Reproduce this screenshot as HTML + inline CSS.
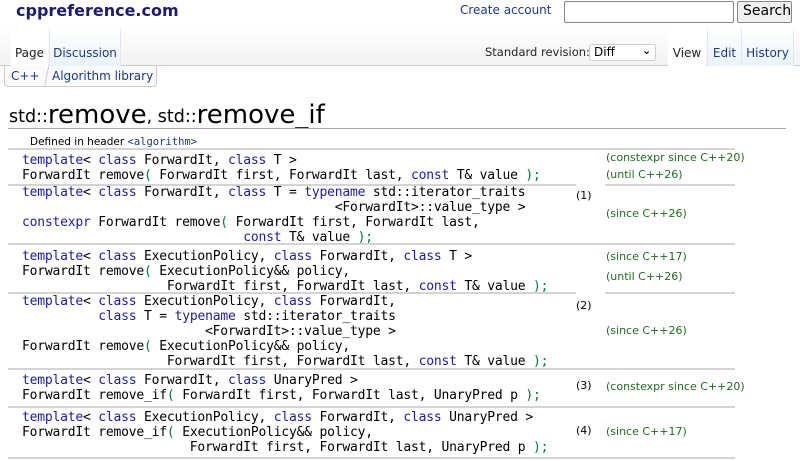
<!DOCTYPE html>
<html><head><meta charset="utf-8"><style>
*{margin:0;padding:0;box-sizing:border-box}
body{width:800px;height:461px;overflow:hidden;background:#fff;font-family:"DejaVu Sans","Liberation Sans",sans-serif;position:relative;color:#000}
.a{position:absolute;white-space:pre}
.logo{left:16px;top:1px;font:bold 16px "DejaVu Sans",sans-serif;color:#1b1b73}
.nav{color:#1a3a8a;font-size:12px}
.bar{position:absolute;left:0;top:25px;width:800px;height:41px;background:linear-gradient(#fff,#f3f3f3);border-bottom:1px solid #c8ccd0}
.tab{position:absolute;top:29px;height:37px;font-size:12px;padding-top:17px;text-align:center}
.code{font:13px "DejaVu Sans Mono","Liberation Mono",monospace;letter-spacing:-0.2px;color:#000;line-height:15px}
.k{color:#1c1ca8}.s{color:#007a3a}
.hr{position:absolute;height:2px;background:#d4d4d4}
.v{color:#1f6e1f;font-size:11px}
.n{font-size:11px}
</style></head><body>
<div class="a logo">cppreference.com</div>
<div class="a nav" style="left:460px;top:3px">Create account</div>
<div class="a" style="left:564px;top:1px;width:170px;height:22px;border:1px solid #888;border-radius:2px"></div>
<div class="a" style="left:737px;top:1px;width:55px;height:22px;border:1px solid #888;border-radius:2px;background:#f0f0f0;font-size:14px;padding:1px 0 0 5px">Search</div>
<div class="bar"></div>
<div class="tab" style="left:11px;width:37px;background:#fff;color:#222">Page</div>
<div class="tab nav" style="left:49px;width:72px;background:linear-gradient(#fff,#eaf3fb);border-left:1px solid #dde8f3;border-right:1px solid #dde8f3">Discussion</div>
<div class="a" style="left:485px;top:45px;font-size:11.5px;color:#222">Standard revision:</div>
<div class="a" style="left:589px;top:44px;width:67px;height:17px;border:1px solid #ccc;border-radius:3px;background:#fff;font-size:12px;padding:0 0 0 4px">Diff<span style="position:absolute;left:52px;top:-1px;font-size:11px;font-weight:bold">&#8964;</span></div>
<div class="tab" style="left:668px;width:38px;background:#fff;color:#222">View</div>
<div class="tab nav" style="left:707px;width:34px;background:linear-gradient(#fff,#eaf3fb);border-left:1px solid #dde8f3">Edit</div>
<div class="tab nav" style="left:741px;width:53px;background:linear-gradient(#fff,#eaf3fb);border-left:1px solid #dde8f3;border-right:1px solid #dde8f3">History</div>
<div class="a" style="left:4px;top:66px;width:153px;height:21px;border:1px solid #ccc;border-top:none;border-radius:0 0 4px 4px;background:#fafafa"></div>
<div class="a" style="left:46px;top:67px;width:1px;height:20px;background:#ccc;transform:skewX(-12deg)"></div>
<div class="a nav" style="left:11px;top:69px">C++</div>
<div class="a nav" style="left:52px;top:69px">Algorithm library</div>
<div class="a" style="left:9px;top:99px;font-size:17.5px"><span>std::</span><span style="font-size:26px;position:relative;top:1px">remove</span>, <span>std::</span><span style="font-size:26px;position:relative;top:1px">remove_if</span></div>
<div class="hr" style="left:8px;top:128px;width:778px;height:1px;background:#aaa"></div>
<div class="a" style="left:30px;top:136px;font-size:10.5px">Defined in header <span style="font-family:'DejaVu Sans Mono',monospace;color:#1a3a8a">&lt;algorithm&gt;</span></div>
<div class="hr" style="left:8px;top:148px;width:727px"></div>

<div class="a code" style="left:22px;top:153px"><span class="k">template</span>&lt; <span class="k">class</span> ForwardIt, <span class="k">class</span> T &gt;
ForwardIt remove<span class="s">(</span> ForwardIt first, ForwardIt last, <span class="k">const</span> T&amp; value <span class="s">);</span></div>
<div class="hr" style="left:8px;top:184px;width:568px"></div>
<div class="hr" style="left:605px;top:184px;width:130px"></div>
<div class="a code" style="left:22px;top:185px"><span class="k">template</span>&lt; <span class="k">class</span> ForwardIt, <span class="k">class</span> T = <span class="k">typename</span> std::iterator_traits
                                         &lt;ForwardIt&gt;::value_type &gt;
<span class="k">constexpr</span> ForwardIt remove<span class="s">(</span> ForwardIt first, ForwardIt last,
                             <span class="k">const</span> T&amp; value <span class="s">);</span></div>
<div class="a v" style="left:606px;top:151px">(constexpr since C++20)</div>
<div class="a v" style="left:606px;top:168px">(until C++26)</div>
<div class="a n" style="left:576px;top:189px">(1)</div>
<div class="a v" style="left:606px;top:207px">(since C++26)</div>
<div class="hr" style="left:8px;top:243px;width:727px"></div>

<div class="a code" style="left:22px;top:249px"><span class="k">template</span>&lt; <span class="k">class</span> ExecutionPolicy, <span class="k">class</span> ForwardIt, <span class="k">class</span> T &gt;
ForwardIt remove<span class="s">(</span> ExecutionPolicy&amp;&amp; policy,
                   ForwardIt first, ForwardIt last, <span class="k">const</span> T&amp; value <span class="s">);</span></div>
<div class="a v" style="left:606px;top:250px">(since C++17)</div>
<div class="a v" style="left:606px;top:270px">(until C++26)</div>
<div class="hr" style="left:8px;top:292px;width:568px"></div>
<div class="hr" style="left:605px;top:292px;width:130px"></div>
<div class="a code" style="left:22px;top:294px"><span class="k">template</span>&lt; <span class="k">class</span> ExecutionPolicy, <span class="k">class</span> ForwardIt,
          <span class="k">class</span> T = <span class="k">typename</span> std::iterator_traits
                        &lt;ForwardIt&gt;::value_type &gt;
ForwardIt remove<span class="s">(</span> ExecutionPolicy&amp;&amp; policy,
                   ForwardIt first, ForwardIt last, <span class="k">const</span> T&amp; value <span class="s">);</span></div>
<div class="a n" style="left:576px;top:299px">(2)</div>
<div class="a v" style="left:606px;top:324px">(since C++26)</div>
<div class="hr" style="left:8px;top:368px;width:727px"></div>

<div class="a code" style="left:22px;top:373px"><span class="k">template</span>&lt; <span class="k">class</span> ForwardIt, <span class="k">class</span> UnaryPred &gt;
ForwardIt remove_if<span class="s">(</span> ForwardIt first, ForwardIt last, UnaryPred p <span class="s">);</span></div>
<div class="a n" style="left:576px;top:379px">(3)</div>
<div class="a v" style="left:606px;top:380px">(constexpr since C++20)</div>
<div class="hr" style="left:8px;top:406px;width:727px"></div>

<div class="a code" style="left:22px;top:410px"><span class="k">template</span>&lt; <span class="k">class</span> ExecutionPolicy, <span class="k">class</span> ForwardIt, <span class="k">class</span> UnaryPred &gt;
ForwardIt remove_if<span class="s">(</span> ExecutionPolicy&amp;&amp; policy,
                      ForwardIt first, ForwardIt last, UnaryPred p <span class="s">);</span></div>
<div class="a n" style="left:576px;top:424px">(4)</div>
<div class="a v" style="left:606px;top:425px">(since C++17)</div>
<div class="hr" style="left:8px;top:457px;width:727px"></div>
</body></html>
